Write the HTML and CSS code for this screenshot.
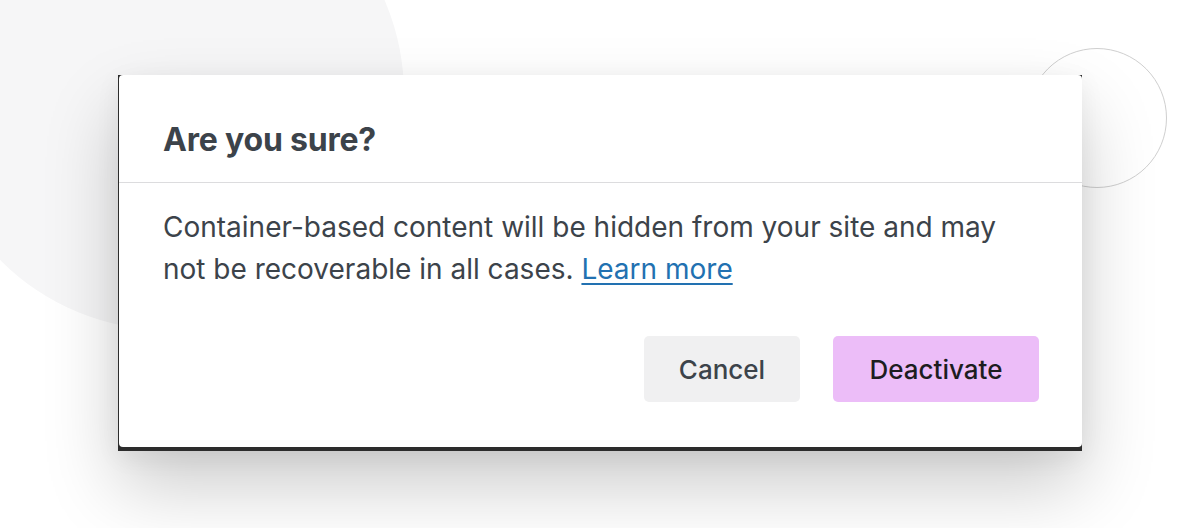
FILE: index.html
```html
<!DOCTYPE html>
<html lang="en">
<head>
<meta charset="utf-8">
<title>Are you sure?</title>
<link rel="stylesheet" href="styles.css">
</head>
<body>
<div class="stage">
  <div class="blob"></div>
  <div class="ring"></div>
  <div class="frame">
    <div class="modal" role="dialog" aria-labelledby="t">
      <div class="modal-header">
        <h1 id="t" class="title">Are you sure?</h1>
      </div>
      <div class="modal-body">
        <p class="message">Container-based content will be hidden from your site and may not be recoverable in all cases. <a class="link" href="#">Learn more</a></p>
        <div class="actions">
          <button class="btn btn-cancel" type="button">Cancel</button>
          <button class="btn btn-primary" type="button">Deactivate</button>
        </div>
      </div>
    </div>
  </div>
</div>
</body>
</html>
```

FILE: styles.css
```css
* { box-sizing: border-box; }
html, body { margin: 0; padding: 0; background: #ffffff; }
body { font-family: Inter, "Noto Sans", "Liberation Sans", sans-serif; color: #3c434a; }

.stage {
  position: relative;
  width: 1200px;
  height: 528px;
  overflow: hidden;
  padding: 75px 0 0 118px;
}

.blob {
  position: absolute;
  left: -68px;
  top: -142px;
  width: 472px;
  height: 472px;
  border-radius: 50%;
  background: #f6f6f7;
}

.ring {
  position: absolute;
  left: 1027px;
  top: 48px;
  width: 140px;
  height: 140px;
  border-radius: 50%;
  border: 1px solid #cfcfcf;
}

.frame {
  position: relative;
  width: 964px;
  height: 376px;
  background: #2c2c2c;
  padding: 0 0 4px 1px;
  box-shadow: 0 36px 70px rgba(0, 0, 0, 0.2), 0 6px 24px rgba(0, 0, 0, 0.06);
}

.modal {
  width: 963px;
  height: 372px;
  background: #ffffff;
  border-radius: 4px;
  display: flex;
  flex-direction: column;
}

.modal-header {
  height: 108px;
  border-bottom: 1px solid #dcdcde;
  padding: 22px 44px 0;
  display: flex;
  align-items: center;
}

.title {
  margin: 0;
  font-size: 32px;
  font-weight: 700;
  color: #3c434a;
  letter-spacing: -0.2px;
}

.modal-body {
  padding: 23px 43px 44px 44px;
  display: flex;
  flex-direction: column;
}

.message {
  margin: 0;
  font-size: 28px;
  line-height: 42px;
  color: #3c434a;
}

.link {
  color: #2271b1;
  text-decoration: underline;
  text-underline-offset: 4px;
  text-decoration-thickness: 2px;
}

.actions {
  margin-top: 46px;
  display: flex;
  justify-content: flex-end;
  gap: 33px;
}

.btn {
  height: 66px;
  padding: 0;
  border: none;
  border-radius: 5px;
  font-family: inherit;
  font-size: 26px;
  font-weight: 500;
  cursor: pointer;
}

.btn-cancel {
  width: 156px;
  background: #f0f0f1;
  color: #3c434a;
}

.btn-primary {
  width: 206px;
  background: #ecbdf8;
  color: #1d1d1f;
}
```
